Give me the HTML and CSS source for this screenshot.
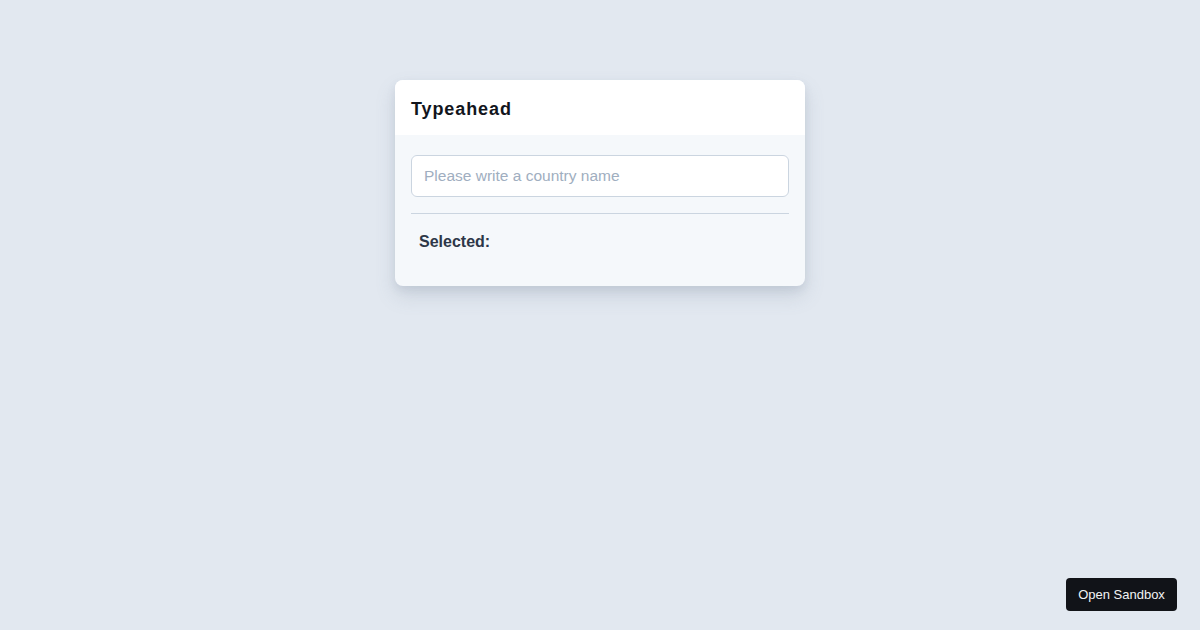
FILE: index.html
```html
<!DOCTYPE html>
<html>
<head>
<meta charset="utf-8">
<link rel="stylesheet" href="styles.css">
</head>
<body>
<div class="page">
  <div class="card">
    <div class="card-header"><h1 class="title">Typeahead</h1></div>
    <div class="card-body">
      <input class="search" type="text" placeholder="Please write a country name">
      <div class="divider"></div>
      <div class="selected">Selected:</div>
    </div>
  </div>
</div>
<button class="sandbox">Open Sandbox</button>
</body>
</html>
```
FILE: styles.css
```css
html, body {
  margin: 0;
  padding: 0;
  height: 100%;
}
body {
  background: #e2e8f0;
  font-family: "Liberation Sans", Arial, sans-serif;
}
.page {
  display: flex;
  justify-content: center;
  padding-top: 80px;
}
.card {
  width: 410px;
  background: #f5f8fb;
  border-radius: 8px;
  overflow: hidden;
  box-shadow: 0 10px 20px rgba(100, 116, 139, 0.18), 0 4px 8px rgba(100, 116, 139, 0.12);
}
.card-header {
  background: #ffffff;
  height: 55px;
  display: flex;
  align-items: center;
  padding: 3px 16px 0;
  box-sizing: border-box;
}
.title {
  margin: 0;
  font-size: 18px;
  line-height: 22px;
  font-weight: 700;
  letter-spacing: 0.9px;
  color: #12151c;
}
.card-body {
  padding: 20px 16px 16px;
}
.search {
  display: block;
  box-sizing: border-box;
  width: 100%;
  height: 42px;
  border: 1px solid #cbd5e0;
  border-radius: 6px;
  background: #ffffff;
  padding: 0 12px;
  font-family: "Liberation Sans", Arial, sans-serif;
  font-size: 15.5px;
  color: #2d3748;
  outline: none;
}
.search::placeholder {
  color: #a0aec0;
}
.divider {
  height: 1px;
  background: #cbd5e0;
  margin-top: 16px;
}
.selected {
  padding: 16px 8px;
  font-size: 16px;
  line-height: 24px;
  font-weight: 700;
  color: #2d3748;
}
.sandbox {
  position: fixed;
  right: 23px;
  bottom: 19px;
  width: 111px;
  height: 33px;
  border: none;
  border-radius: 4px;
  background: #111318;
  color: #f1f3f5;
  font-family: "Liberation Sans", Arial, sans-serif;
  font-size: 13px;
  padding: 0;
}
```
